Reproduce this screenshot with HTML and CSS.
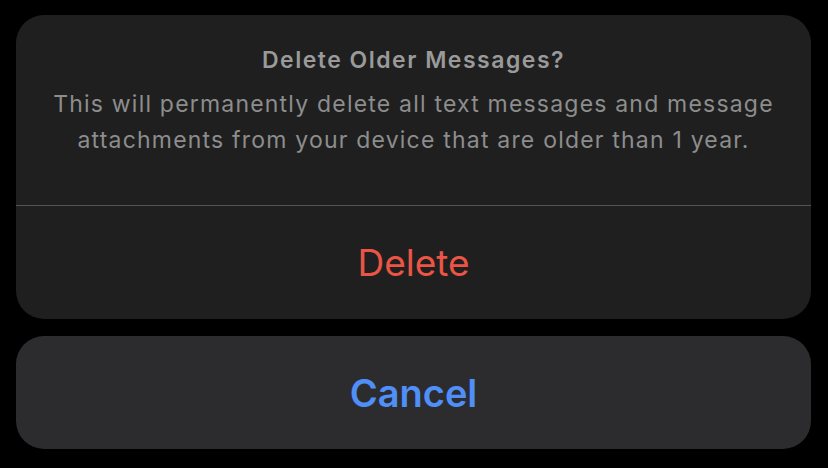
FILE: index.html
```html
<!DOCTYPE html>
<html>
<head>
<meta charset="utf-8">
<link rel="stylesheet" href="styles.css">
</head>
<body>
<div class="sheet">
  <div class="card group">
    <div class="header">
      <div class="title">Delete Older Messages?</div>
      <div class="message">This will permanently delete all text messages and message attachments from your device that are older than 1 year.</div>
    </div>
    <div class="divider"></div>
    <div class="action destructive">Delete</div>
  </div>
  <div class="card cancel">
    <div class="action cancel-label">Cancel</div>
  </div>
</div>
</body>
</html>
```
FILE: styles.css
```css
html, body {
  margin: 0;
  padding: 0;
  background: #000;
  width: 828px;
  height: 468px;
  overflow: hidden;
}
.sheet {
  padding: 15px 17px 0 16px;
  display: flex;
  flex-direction: column;
  gap: 17px;
  font-family: Inter, "Open Sans", sans-serif;
}
.card {
  border-radius: 28px;
  overflow: hidden;
}
.group {
  background: #1f1f1f;
}
.cancel {
  background: #2c2c2e;
}
.header {
  height: 190px;
  box-sizing: border-box;
  padding: 31px 20px 0;
  text-align: center;
}
.title {
  color: #9a9a9a;
  font-size: 23px;
  font-weight: 600;
  line-height: 28px;
  letter-spacing: 1.5px;
}
.message {
  color: #8d8d8d;
  font-size: 23px;
  font-weight: 400;
  line-height: 36px;
  margin-top: 12px;
  letter-spacing: 1.2px;
}
.divider {
  height: 1px;
  background: #545454;
}
.action {
  height: 113px;
  display: flex;
  align-items: center;
  justify-content: center;
}
.destructive {
  color: #eb5545;
  font-weight: 400;
  font-size: 37px;
}
.cancel-label {
  color: #4f8ff7;
  font-weight: 600;
  font-size: 38px;
}
```
